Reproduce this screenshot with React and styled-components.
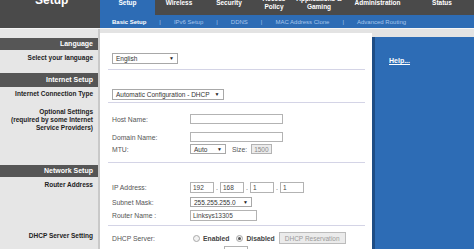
import React from "react";
import styled, { createGlobalStyle } from "styled-components";

const Global = createGlobalStyle`
  html, body { margin: 0; padding: 0; background: #e3e3e3; }
  body { font-family: "Liberation Sans", Arial, sans-serif; overflow: hidden; }
`;

const BLUE = "#2d6cb5";

const Page = styled.div`
  width: 474px;
  height: 249px;
  overflow: hidden;
  background: #e3e3e3;
`;

const Header = styled.div`
  display: flex;
  height: 28px;
  overflow: hidden;
  border-bottom: 1px solid #f5f5f5;
`;

const Brand = styled.div`
  width: 100px;
  flex-shrink: 0;
  background: #4a4a4a;
  padding-left: 35px;
  box-sizing: border-box;
`;

const BrandTitle = styled.div`
  margin-top: -6px;
  color: #fff;
  font-weight: bold;
  font-size: 12px;
  line-height: 12px;
`;

const Nav = styled.div`
  flex: 1;
  display: flex;
  flex-direction: column;
`;

const TabRow = styled.div`
  display: flex;
  height: 24px;
  margin-top: -9px;
  background: #4a4a4a;
  flex-shrink: 0;
`;

const Tab = styled.div`
  width: ${(p) => p.$w}px;
  flex-shrink: 0;
  overflow: hidden;
  display: flex;
  flex-direction: column;
  align-items: center;
  justify-content: center;
  text-align: center;
  color: #fff;
  font-size: 6.5px;
  font-weight: bold;
  line-height: 8px;
  white-space: nowrap;
  background: ${(p) => (p.$active ? BLUE : "transparent")};
`;

const SubRow = styled.div`
  height: 13px;
  background: ${BLUE};
  display: flex;
  align-items: center;
  gap: 13px;
  padding-left: 12px;
  font-size: 6px;
  color: #a8c6ec;
  white-space: nowrap;
`;

const SubItem = styled.span`
  color: ${(p) => (p.$active ? "#fff" : "#a8c6ec")};
  font-weight: ${(p) => (p.$active ? "bold" : "normal")};
`;

const Body = styled.div`
  display: flex;
  align-items: stretch;
`;

const Form = styled.div`
  width: 372px;
  flex-shrink: 0;
  display: flex;
  flex-direction: column;
`;

const Row = styled.div`
  display: grid;
  grid-template-columns: 100px 1fr;
  height: ${(p) => (p.$h ? `${p.$h}px` : "auto")};
`;

const Side = styled.div`
  box-sizing: border-box;
  background: ${(p) => (p.$band ? "#565656" : "#e6e6e6")};
  color: ${(p) => (p.$band ? "#fff" : "#222")};
  border-right: 2px solid #c9c9c9;
  text-align: right;
  padding-right: 5px;
  padding-top: ${(p) => p.$pt || 0}px;
  font-weight: bold;
  font-size: ${(p) => (p.$band ? 7 : 6.5)}px;
  line-height: 8px;
  display: flex;
  flex-direction: column;
  justify-content: ${(p) => (p.$top ? "flex-start" : "center")};
`;

const Main = styled.div`
  box-sizing: border-box;
  background: #fff;
  padding: 0 7px 0 8px;
  display: flex;
  flex-direction: column;
  border-top: ${(p) => (p.$top ? "4px solid #e3e3e3" : "none")};
`;

const Rule = styled.div`
  border-top: 1px solid #d4d4e6;
  margin-top: ${(p) => p.$mt || 0}px;
`;

const Field = styled.div`
  display: flex;
  align-items: center;
  height: ${(p) => p.$h}px;
  margin-top: ${(p) => p.$mt || 0}px;
  padding-left: 4px;
  white-space: nowrap;
`;

const Label = styled.span`
  width: 78px;
  flex-shrink: 0;
  font-size: 6.8px;
  color: #555;
`;

const Note = styled.span`
  font-size: 6.8px;
  color: #555;
  margin: ${(p) => (p.$tight ? "0 2px 0 0" : "0 4px 0 6px")};
`;

const Input = styled.input`
  box-sizing: border-box;
  width: ${(p) => p.$w}px;
  height: ${(p) => p.$h || 10}px;
  border: 1px solid #b3b3b3;
  border-radius: 0;
  padding: 0 2px;
  margin: 0;
  font-family: inherit;
  font-size: 6.5px;
  color: ${(p) => (p.$disabled ? "#888" : "#444")};
  background: ${(p) => (p.$disabled ? "#ececec" : "#fff")};
  outline: none;
`;

const Select = styled.div`
  box-sizing: border-box;
  width: ${(p) => (p.$w ? `${p.$w}px` : "auto")};
  height: ${(p) => p.$h || 10}px;
  border: 1px solid #a8a8a8;
  display: flex;
  align-items: center;
  justify-content: space-between;
  gap: 5px;
  padding: 0 3px;
  font-size: 6.5px;
  color: #333;
  background: #fff;
`;

const Arrow = styled.span`
  font-size: 5px;
  color: #222;
`;

const Dot = styled.span`
  width: 6px;
  text-align: center;
  font-size: 7px;
  color: #555;
`;

const Radio = styled.span`
  box-sizing: border-box;
  width: 7px;
  height: 7px;
  border-radius: 50%;
  border: 1px solid #a9a9a9;
  background: #f2f2f2;
  margin: 0 3px 0 3px;
  display: flex;
  align-items: center;
  justify-content: center;
  &::after {
    content: "";
    width: 3px;
    height: 3px;
    border-radius: 50%;
    background: ${(p) => (p.$checked ? "#555" : "transparent")};
  }
`;

const RadioText = styled.span`
  font-size: 6.8px;
  font-weight: bold;
  color: #444;
  margin-right: 4px;
`;

const Button = styled.span`
  box-sizing: border-box;
  height: 12px;
  padding: 0 5px;
  border: 1px solid #bcbcbc;
  background: #ebebeb;
  color: #9a9a9a;
  font-size: 6.5px;
  display: flex;
  align-items: center;
`;

const Help = styled.div`
  flex: 1;
  margin-top: 8px;
  background: ${BLUE};
  border-left: 3px solid #1e4d85;
  padding: 20px 0 0 14px;
  font-size: 7px;
  line-height: 8px;
`;

const HelpLink = styled.a`
  color: #fff;
  font-weight: bold;
  font-size: 7px;
  text-decoration: underline;
`;

const tabs = [
  { w: 55, lines: ["Setup"], active: true },
  { w: 48, lines: ["Wireless"] },
  { w: 52, lines: ["Security"] },
  { w: 38, lines: ["Access", "Policy"] },
  { w: 52, lines: ["Applications &", "Gaming"] },
  { w: 65, lines: ["Administration"] },
  { w: 64, lines: ["Status"] },
];

const subs = ["Basic Setup", "IPv6 Setup", "DDNS", "MAC Address Clone", "Advanced Routing"];

export default function App() {
  return (
    <Page>
      <Global />
      <Header>
        <Brand>
          <BrandTitle>Setup</BrandTitle>
        </Brand>
        <Nav>
          <TabRow>
            {tabs.map((t) => (
              <Tab key={t.lines.join()} $w={t.w} $active={t.active}>
                {t.lines.map((l) => (
                  <span key={l}>{l}</span>
                ))}
              </Tab>
            ))}
          </TabRow>
          <SubRow>
            {subs.map((s, i) => (
              <React.Fragment key={s}>
                {i > 0 && <span>|</span>}
                <SubItem $active={i === 0}>{s}</SubItem>
              </React.Fragment>
            ))}
          </SubRow>
        </Nav>
      </Header>

      <Body>
        <Form>
          <Row $h={9}>
            <Side />
            <Main $top />
          </Row>
          <Row $h={12}>
            <Side $band>Language</Side>
            <Main />
          </Row>
          <Row $h={16}>
            <Side>Select your language</Side>
            <Main>
              <Field $h={16}>
                <Select $w={66} $h={11}>
                  English<Arrow>▼</Arrow>
                </Select>
              </Field>
            </Main>
          </Row>
          <Row $h={7}>
            <Side />
            <Main>
              <Rule $mt={3} />
            </Main>
          </Row>
          <Row $h={14}>
            <Side $band>Internet Setup</Side>
            <Main />
          </Row>
          <Row $h={14}>
            <Side>Internet Connection Type</Side>
            <Main>
              <Field $h={14}>
                <Select $h={11}>
                  Automatic Configuration - DHCP<Arrow>▼</Arrow>
                </Select>
              </Field>
            </Main>
          </Row>
          <Row $h={5}>
            <Side />
            <Main>
              <Rule $mt={1} />
            </Main>
          </Row>
          <Row $h={53}>
            <Side $top $pt={2}>
              <span>Optional Settings</span>
              <span>(required by some Internet</span>
              <span>Service Providers)</span>
            </Side>
            <Main>
              <Field $h={10} $mt={8}>
                <Label>Host Name:</Label>
                <Input $w={93} readOnly />
              </Field>
              <Field $h={10} $mt={8}>
                <Label>Domain Name:</Label>
                <Input $w={93} readOnly />
              </Field>
              <Field $h={10} $mt={2}>
                <Label>MTU:</Label>
                <Select $w={36}>
                  Auto<Arrow>▼</Arrow>
                </Select>
                <Note>Size:</Note>
                <Input $w={21} $disabled readOnly value="1500" />
              </Field>
            </Main>
          </Row>
          <Row $h={6}>
            <Side />
            <Main>
              <Rule $mt={3} />
            </Main>
          </Row>
          <Row $h={12}>
            <Side $band>Network Setup</Side>
            <Main />
          </Row>
          <Row $h={48}>
            <Side $top $pt={4}>
              Router Address
            </Side>
            <Main>
              <Field $h={11} $mt={5}>
                <Label>IP Address:</Label>
                <Input $w={24} $h={11} readOnly value="192" />
                <Dot>.</Dot>
                <Input $w={24} $h={11} readOnly value="168" />
                <Dot>.</Dot>
                <Input $w={24} $h={11} readOnly value="1" />
                <Dot>.</Dot>
                <Input $w={24} $h={11} readOnly value="1" />
              </Field>
              <Field $h={10} $mt={4}>
                <Label>Subnet Mask:</Label>
                <Select $w={62}>
                  255.255.255.0<Arrow>▼</Arrow>
                </Select>
              </Field>
              <Field $h={11} $mt={3}>
                <Label>Router Name :</Label>
                <Input $w={67} $h={11} readOnly value="Linksys13305" />
              </Field>
            </Main>
          </Row>
          <Row $h={7}>
            <Side />
            <Main>
              <Rule />
            </Main>
          </Row>
          <Row>
            <Side $top>DHCP Server Setting</Side>
            <Main>
              <Field $h={12}>
                <Label>DHCP Server:</Label>
                <Radio />
                <RadioText>Enabled</RadioText>
                <Radio $checked />
                <RadioText>Disabled</RadioText>
                <Button>DHCP Reservation</Button>
              </Field>
              <Field $h={11} $mt={2}>
                <Label>Start IP Address:</Label>
                <Note $tight>192.168.1.</Note>
                <Input $w={24} $h={11} readOnly value="100" />
              </Field>
            </Main>
          </Row>
        </Form>
        <Help>
          <HelpLink href="#">Help...</HelpLink>
        </Help>
      </Body>
    </Page>
  );
}
